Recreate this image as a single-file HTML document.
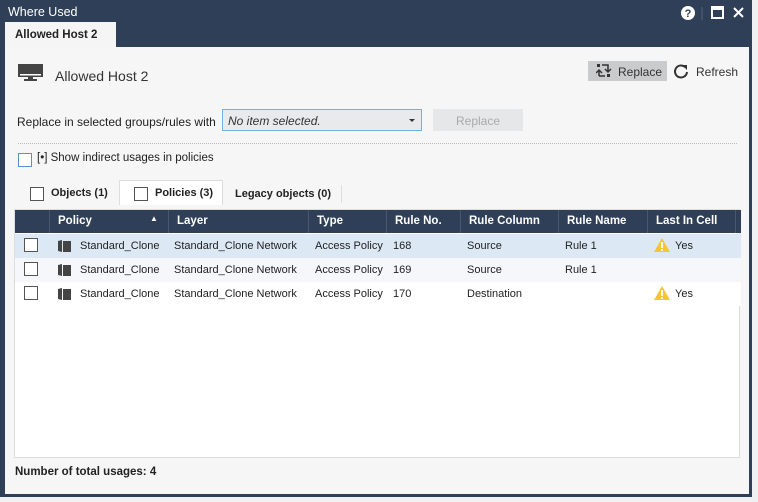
<!DOCTYPE html>
<html><head><meta charset="utf-8"><style>
*{box-sizing:border-box;margin:0;padding:0}
body{width:758px;height:502px;background:#eef0f2;font-family:"Liberation Sans",sans-serif;font-size:12px;color:#222;position:relative;overflow:hidden}
.win{position:absolute;left:0;top:0;width:752px;height:497px;background:#2e3f57}
.title{position:absolute;left:8px;top:5px;color:#fff;font-size:12.5px}
.tab{position:absolute;left:5px;top:22px;width:111px;height:25px;background:#f5f5f5;font-weight:bold;font-size:11.5px;padding:7px 0 0 10px}
.content{position:absolute;left:5px;top:47px;width:744px;height:447px;background:#f6f6f6}
.abs{position:absolute}
.btn{background:#cacbcd}
.th{position:absolute;top:0;height:23px;color:#fff;font-weight:bold;font-size:11.5px;padding:5px 0 0 8px;border-right:1px solid #46586f}
.row{position:absolute;left:0;width:726px;height:24px}
.c{position:absolute;top:6px;font-size:11px;color:#222}
.cb{position:absolute;width:14px;height:14px;border:1px solid #555;background:#fff}
</style></head><body>
<div class="win">
<div class="title">Where Used</div>
<svg class="abs" style="left:680px;top:5px" width="70" height="16">
<circle cx="8" cy="8" r="7" fill="#fff"/><text x="8" y="12" text-anchor="middle" font-size="11" font-weight="bold" fill="#2e3f57" font-family="Liberation Sans">?</text>
<line x1="22" y1="2" x2="22" y2="15" stroke="#55667d"/>
<rect x="32" y="2" width="11" height="11" fill="none" stroke="#fff" stroke-width="2"/><rect x="32" y="2" width="11" height="3" fill="#fff"/>
<path d="M54 3 L63 12 M63 3 L54 12" stroke="#fff" stroke-width="2"/>
</svg>
<div class="tab">Allowed Host 2</div>
<div class="content">
<svg class="abs" style="left:13px;top:17px" width="26" height="20"><rect x="0" y="0" width="25" height="13" fill="#444"/><rect x="2" y="10" width="21" height="1.5" fill="#fff"/><rect x="10" y="13" width="5" height="2" fill="#444"/><rect x="6" y="15" width="13" height="2" fill="#444"/></svg>
<div class="abs" style="left:50px;top:21px;font-size:14px;color:#333">Allowed Host 2</div>
<div class="abs btn" style="left:583px;top:14px;width:79px;height:20px"></div>
<svg class="abs" style="left:591px;top:16px" width="16" height="16"><rect x="1" y="1" width="3" height="3" fill="#333"/><rect x="11" y="11" width="3" height="3" fill="#333"/><path d="M6 2 H12 V8 M9 6 L12 9 L15 6" stroke="#333" stroke-width="1.5" fill="none"/><path d="M3 13 V7 M0 10 L3 7 L6 10 M3 13 H9" stroke="#333" stroke-width="1.5" fill="none"/></svg>
<div class="abs" style="left:613px;top:18px;color:#333">Replace</div>
<svg class="abs" style="left:668px;top:16px" width="16" height="16"><path d="M12 4 A6 6 0 1 0 14 9" stroke="#333" stroke-width="2" fill="none"/><path d="M9 2 L14 2 L14 7 Z" fill="#333"/></svg>
<div class="abs" style="left:691px;top:18px;color:#333">Refresh</div>
<div class="abs" style="left:12px;top:68px;color:#222">Replace in selected groups/rules with</div>
<div class="abs" style="left:217px;top:62px;width:200px;height:22px;border:1px solid #6db3ea;background:#e9eaec;font-style:italic;padding:4px 5px;color:#333">No item selected.</div>
<div class="abs" style="left:404px;top:72px;border-left:3px solid transparent;border-right:3px solid transparent;border-top:3px solid #333"></div>
<div class="abs" style="left:428px;top:62px;width:90px;height:22px;background:#e6e7e9;color:#aaa;text-align:center;padding-top:5px">Replace</div>
<div class="abs" style="left:13px;top:96px;width:719px;border-top:1px dotted #bbb"></div>
<div class="abs" style="left:13px;top:106px;width:14px;height:14px;border:1px solid #5a8fd0;background:#fff"></div>
<div class="abs" style="left:32px;top:105px;color:#222;font-size:11.5px">[•] Show indirect usages in policies</div>
<div class="abs" style="left:114px;top:133px;width:104px;height:25px;background:#fff;border:1px solid #ddd;border-bottom:none"></div>
<div class="abs" style="left:336px;top:138px;height:18px;border-left:1px solid #ddd"></div>
<div class="cb" style="left:25px;top:140px"></div><div class="abs" style="left:46px;top:140px;font-weight:bold;font-size:11px">Objects (1)</div>
<div class="cb" style="left:129px;top:140px"></div><div class="abs" style="left:150px;top:140px;font-weight:bold;font-size:11px">Policies (3)</div>
<div class="abs" style="left:230px;top:141px;font-weight:bold;font-size:11px">Legacy objects (0)</div>
<div class="abs" style="left:9px;top:162px;width:726px;height:249px;background:#fff;border:1px solid #ddd">
<div class="abs" style="left:0;top:0;width:726px;height:23px;background:#2e3f57"></div>
<div class="th" style="left:0;width:35px"></div>
<div class="th" style="left:35px;width:119px">Policy<span style="position:absolute;left:100px;top:4px;font-size:8px">▲</span></div>
<div class="th" style="left:154px;width:140px">Layer</div>
<div class="th" style="left:294px;width:78px">Type</div>
<div class="th" style="left:372px;width:74px">Rule No.</div>
<div class="th" style="left:446px;width:98px">Rule Column</div>
<div class="th" style="left:544px;width:89px">Rule Name</div>
<div class="th" style="left:633px;width:88px">Last In Cell</div>
<div class="row" style="top:24px;background:#dce9f5"><div class="cb" style="left:9px;top:4px"></div><svg class="abs" style="left:43px;top:6px" width="14" height="12"><path d="M0 1 L4 0 V12 L0 11Z M5 1 H13 V12 H5Z" fill="#444"/></svg><div class="c" style="left:65px">Standard_Clone</div><div class="c" style="left:159px">Standard_Clone Network</div><div class="c" style="left:300px">Access Policy</div><div class="c" style="left:378px">168</div><div class="c" style="left:452px">Source</div><div class="c" style="left:550px">Rule 1</div><svg class="abs" style="left:639px;top:4px" width="16" height="14"><path d="M8 0 L16 14 H0Z" fill="#f7c531"/><rect x="7" y="4" width="2" height="6" fill="#fff"/><rect x="7" y="11" width="2" height="2" fill="#fff"/></svg><div class="c" style="left:660px">Yes</div></div>
<div class="row" style="top:48px;background:#f5f7fa"><div class="cb" style="left:9px;top:4px"></div><svg class="abs" style="left:43px;top:6px" width="14" height="12"><path d="M0 1 L4 0 V12 L0 11Z M5 1 H13 V12 H5Z" fill="#444"/></svg><div class="c" style="left:65px">Standard_Clone</div><div class="c" style="left:159px">Standard_Clone Network</div><div class="c" style="left:300px">Access Policy</div><div class="c" style="left:378px">169</div><div class="c" style="left:452px">Source</div><div class="c" style="left:550px">Rule 1</div></div>
<div class="row" style="top:72px;background:#fff"><div class="cb" style="left:9px;top:4px"></div><svg class="abs" style="left:43px;top:6px" width="14" height="12"><path d="M0 1 L4 0 V12 L0 11Z M5 1 H13 V12 H5Z" fill="#444"/></svg><div class="c" style="left:65px">Standard_Clone</div><div class="c" style="left:159px">Standard_Clone Network</div><div class="c" style="left:300px">Access Policy</div><div class="c" style="left:378px">170</div><div class="c" style="left:452px">Destination</div><svg class="abs" style="left:639px;top:4px" width="16" height="14"><path d="M8 0 L16 14 H0Z" fill="#f7c531"/><rect x="7" y="4" width="2" height="6" fill="#fff"/><rect x="7" y="11" width="2" height="2" fill="#fff"/></svg><div class="c" style="left:660px">Yes</div></div>
</div>
<div class="abs" style="left:10px;top:419px;font-weight:bold;font-size:11.5px;color:#222">Number of total usages: 4</div>
</div>
</div>
</body></html>
